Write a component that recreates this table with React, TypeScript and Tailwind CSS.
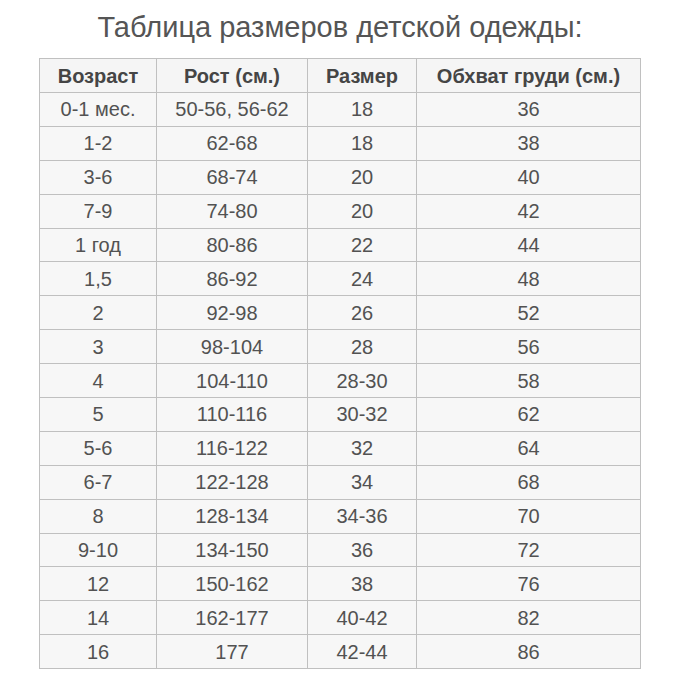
const rows: [string, string, string, string][] = [
  ["0-1 мес.", "50-56, 56-62", "18", "36"],
  ["1-2", "62-68", "18", "38"],
  ["3-6", "68-74", "20", "40"],
  ["7-9", "74-80", "20", "42"],
  ["1 год", "80-86", "22", "44"],
  ["1,5", "86-92", "24", "48"],
  ["2", "92-98", "26", "52"],
  ["3", "98-104", "28", "56"],
  ["4", "104-110", "28-30", "58"],
  ["5", "110-116", "30-32", "62"],
  ["5-6", "116-122", "32", "64"],
  ["6-7", "122-128", "34", "68"],
  ["8", "128-134", "34-36", "70"],
  ["9-10", "134-150", "36", "72"],
  ["12", "150-162", "38", "76"],
  ["14", "162-177", "40-42", "82"],
  ["16", "177", "42-44", "86"],
]

const headers = ["Возраст", "Рост (см.)", "Размер", "Обхват груди (см.)"]

export default function App() {
  return (
    <div
      className="w-[680px] h-[688px] bg-white flex flex-col items-center"
      style={{ fontFamily: '"Liberation Sans", Arial, sans-serif' }}
    >
      <h1 className="mt-[10px] h-[38px] text-[29px] leading-[34px] text-[#555]">
        Таблица размеров детской одежды:
      </h1>
      <table className="mt-[10px] border-collapse table-fixed w-[601px] text-[#525252] bg-[#f7f7f7]">
        <colgroup>
          <col className="w-[117px]" />
          <col className="w-[151px]" />
          <col className="w-[109px]" />
          <col className="w-[224px]" />
        </colgroup>
        <thead>
          <tr className="h-[34px]">
            {headers.map((h) => (
              <th
                key={h}
                className="border border-[#c0c0c0] text-[20px] font-bold text-center p-0 text-[#454545] bg-[#f5f5f5]"
              >
                {h}
              </th>
            ))}
          </tr>
        </thead>
        <tbody>
          {rows.map((r, i) => (
            <tr key={i} className="h-[33.9px]">
              {r.map((c, j) => (
                <td key={j} className="border border-[#c0c0c0] text-[20px] text-center p-0">
                  {c}
                </td>
              ))}
            </tr>
          ))}
        </tbody>
      </table>
    </div>
  )
}
